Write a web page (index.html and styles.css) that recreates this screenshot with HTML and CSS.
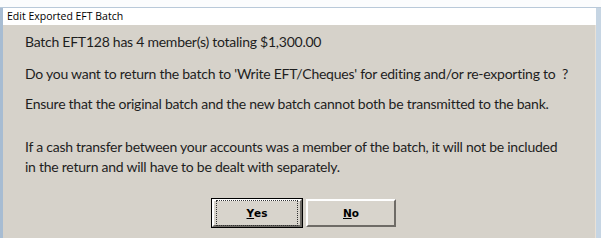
FILE: index.html
```html
<!DOCTYPE html>
<html lang="en">
<head>
    <meta charset="UTF-8">
    <title>Edit Exported EFT Batch</title>
    <link rel="stylesheet" href="styles.css">
</head>
<body>
    <!-- sheet behind the dialog -->
    <div class="backdrop"></div>

    <div class="dialog">
        <div class="title-bar">Edit Exported EFT Batch</div>

        <div class="dialog-body">
            <p class="msg first">Batch EFT128 has 4 member(s) totaling $1,300.00</p>
            <p class="msg">Do you want to return the batch to 'Write EFT/Cheques' for editing and/or re-exporting to &nbsp;?</p>
            <p class="msg">Ensure that the original batch and the new batch cannot both be transmitted to the bank.</p>
            <p class="msg wrap">If a cash transfer between your accounts was a member of the batch, it will not be included in the return and will have to be dealt with separately.</p>

            <div class="buttons">
                <button class="btn default"><span class="focus"><u>Y</u>es</span></button>
                <button class="btn"><span><u>N</u>o</span></button>
            </div>
        </div>
    </div>
</body>
</html>
```

FILE: styles.css
```css
body {
    margin: 0;
    background: #f3f6f9;
    overflow: hidden;
}

.backdrop {
    height: 7px;
    background: #fbfcfd;
    border-bottom: 1px solid #b9c9d9;
}

.dialog {
    width: 593px;
    height: 230px;
    border-left: 3px solid #a7bcd2;
    border-right: 5px solid #c6d5e3;
    box-shadow: inset -1px 0 0 #e9e1d6;
    background: #d6d2ca;
    display: flex;
    flex-direction: column;
}

.title-bar {
    height: 17px;
    padding-left: 4px;
    background: #ffffff;
    font-family: "Open Sans", sans-serif;
    font-size: 10.5px;
    line-height: 17px;
    color: #000;
}

.dialog-body {
    flex: 1;
    padding: 0 0 0 22px;
    font-family: Lato, sans-serif;
    font-size: 14px;
    letter-spacing: -0.25px;
    color: #1e1e1e;
}

.msg {
    margin: 0;
    line-height: 30px;
}

.msg.first {
    margin-top: 2px;
    margin-bottom: 2px;
}

.msg.wrap {
    margin-top: 18px;
    line-height: 20px;
    width: 538px;
}

.buttons {
    display: flex;
    gap: 4px;
    margin-top: 22px;
    padding-left: 187px;
}

.btn {
    width: 90px;
    height: 28px;
    padding: 0;
    background: #d8d4cc;
    border: 2px solid;
    border-color: #ffffff #6e6b66 #6e6b66 #ffffff;
    font-family: "DejaVu Sans", sans-serif;
    font-size: 10.5px;
    font-weight: bold;
    letter-spacing: 0;
    color: #000;
    display: flex;
    align-items: center;
    justify-content: center;
}

.btn.default {
    outline: 1px solid #000;
}

.btn span {
    display: flex;
    align-items: center;
    justify-content: center;
    width: 100%;
    height: 100%;
}

.btn .focus {
    margin: 2px;
    border: 1px dotted #333;
}
```
